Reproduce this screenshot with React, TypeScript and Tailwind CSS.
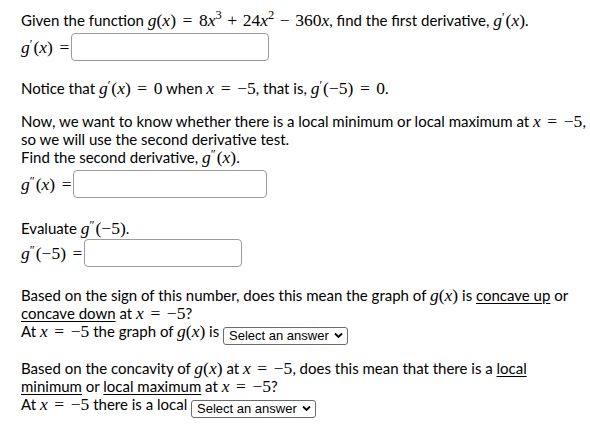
import React from "react";

const M = ({ children }: { children: React.ReactNode }) => (
  <span className="font-['Liberation_Serif'] text-[17.5px] leading-[10px] whitespace-nowrap">{children}</span>
);
const V = ({ children }: { children: React.ReactNode }) => <i>{children}</i>;
const Eq = () => <span className="inline-block w-[13px] text-center mx-[5px]">=</span>;
const EqEnd = () => <span className="inline-block w-[13px] text-center ml-[5px]">=</span>;
const Op = ({ c }: { c: string }) => <span className="inline-block w-[13px] text-center mx-[4px]">{c}</span>;

const gx = (
  <>
    <V>g</V>(<V>x</V>)
  </>
);
const gp = (
  <>
    <V>g</V>
    <span className="inline-block text-[12px] leading-[0px] align-[5px] mr-[1px]">′</span>
  </>
);
const gpp = (
  <>
    <V>g</V>
    <span className="inline-block text-[12px] leading-[0px] align-[5px] mr-[1px]">″</span>
  </>
);

const Input = ({ w }: { w: number }) => (
  <span
    className="inline-block h-[28px] border border-[#9a9a9a] rounded-[4px] bg-white align-middle"
    style={{ width: w }}
  />
);

const Select = () => (
  <span className="inline-flex items-center h-[18px] border border-[#6b6b6b] rounded-[3px] pl-[5px] pr-[4px] align-[-3px] font-['Liberation_Sans'] text-[13px] leading-none text-black bg-white">
    Select an answer
    <svg width="9" height="7" viewBox="0 0 9 7" className="ml-[5px]">
      <path d="M1 1.5 L4.5 5 L8 1.5" fill="none" stroke="#000" strokeWidth="1.8" />
    </svg>
  </span>
);

const U = ({ children }: { children: React.ReactNode }) => <span className="underline underline-offset-2">{children}</span>;

const Sup = ({ children }: { children: React.ReactNode }) => (
  <span className="text-[12.5px] align-[7px] leading-[0px]">{children}</span>
);

const X5 = () => (
  <M>
    <V>x</V>
    <Eq />−5
  </M>
);

export default function App() {
  return (
    <div className="w-[590px] h-[427px] bg-white text-black font-[Lato] text-[15px] leading-[18px] pl-[21px] pt-[11px]">
      <div className="whitespace-nowrap h-[18px]">
        Given the function{" "}
        <M>
          {gx}
          <Eq />8<V>x</V>
          <Sup>3</Sup>
          <Op c="+" />
          24<V>x</V>
          <Sup>2</Sup>
          <Op c="−" />
          360<V>x</V>
        </M>
        , find the first derivative,{" "}
        <M>
          {gp}(<V>x</V>)
        </M>
        .
      </div>
      <div className="mt-[3px] flex items-center h-[30px]">
        <M>
          {gp}(<V>x</V>)<EqEnd />
        </M>
        <Input w={198} />
      </div>

      <div className="mt-[17px] whitespace-nowrap h-[18px]">
        Notice that{" "}
        <M>
          {gp}(<V>x</V>)<Eq />0
        </M>{" "}
        when <X5 />, that is,{" "}
        <M>
          {gp}(−5)<Eq />0
        </M>
        .
      </div>

      <div className="mt-[15px] whitespace-nowrap h-[18px]">
        Now, we want to know whether there is a local minimum or local maximum at <X5 />,
      </div>
      <div className="whitespace-nowrap h-[18px]">so we will use the second derivative test.</div>
      <div className="whitespace-nowrap h-[18px]">
        Find the second derivative,{" "}
        <M>
          {gpp}(<V>x</V>)
        </M>
        .
      </div>
      <div className="mt-[3px] flex items-center h-[30px]">
        <M>
          {gpp}(<V>x</V>)<EqEnd />
        </M>
        <Input w={194} />
      </div>

      <div className="mt-[20px] whitespace-nowrap h-[18px]">
        Evaluate <M>{gpp}(−5)</M>.
      </div>
      <div className="mt-[1px] flex items-center h-[30px]">
        <M>
          {gpp}(−5)<EqEnd />
        </M>
        <Input w={158} />
      </div>

      <div className="mt-[18px] whitespace-nowrap h-[18px]">
        Based on the sign of this number, does this mean the graph of <M>{gx}</M> is <U>concave up</U> or
      </div>
      <div className="whitespace-nowrap h-[18px]">
        <U>concave down</U> at <X5 />?
      </div>
      <div className="whitespace-nowrap h-[18px]">
        At <X5 /> the graph of <M>{gx}</M> is <Select />
      </div>

      <div className="mt-[19px] whitespace-nowrap h-[18px]">
        Based on the concavity of <M>{gx}</M> at <X5 />, does this mean that there is a <U>local</U>
      </div>
      <div className="whitespace-nowrap h-[18px]">
        <U>minimum</U> or <U>local maximum</U> at <X5 />?
      </div>
      <div className="whitespace-nowrap h-[18px]">
        At <X5 /> there is a local <Select />
      </div>
    </div>
  );
}
